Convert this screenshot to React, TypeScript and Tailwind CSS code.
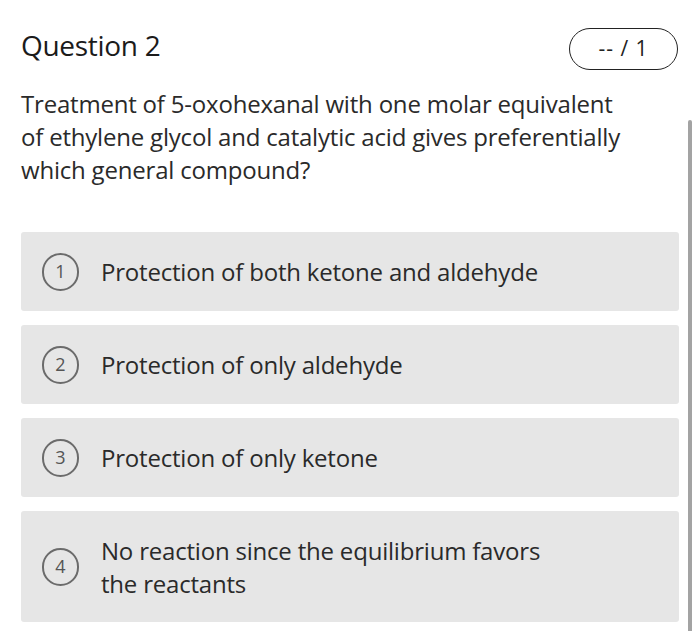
const options = [
  { text: ["Protection of both ketone and aldehyde"] },
  { text: ["Protection of only aldehyde"] },
  { text: ["Protection of only ketone"] },
  { text: ["No reaction since the equilibrium favors", "the reactants"] },
];

export default function App() {
  return (
    <div className="relative min-h-[631px] w-[700px] overflow-hidden bg-white font-['Open_Sans',sans-serif] text-[#222]">
      <div className="flex items-start justify-between pl-[21px] pr-[22px] pt-[26px]">
        <h1 className="text-[28px] leading-[38px] tracking-[-0.3px] text-[#1b1b1b]">Question 2</h1>
        <div className="mt-[2px] flex h-[42px] w-[109px] items-center justify-center rounded-full border-[1.5px] border-[#222] text-[21px] tracking-[1px] text-[#222]">
          -- / 1
        </div>
      </div>

      <p className="mt-[17px] pl-[21px] text-[24px] leading-[33px] tracking-[-0.2px] text-[#2a2a2a]">
        Treatment of 5-oxohexanal with one molar equivalent
        <br />
        of ethylene glycol and catalytic acid gives preferentially
        <br />
        which general compound?
      </p>

      <div className="mt-[46px] flex w-[679px] flex-col gap-[14px] pl-[21px]">
        {options.map((o, i) => (
          <div
            key={i}
            className={
              "flex items-center gap-[22px] rounded-[3px] bg-[#e6e6e6] pl-[21px] " +
              (o.text.length > 1 ? "h-[111px]" : "h-[79px]")
            }
          >
            <div className="flex h-[38px] w-[37px] shrink-0 items-center justify-center rounded-full border-2 border-[#6b6b6b] text-[18px] text-[#555]">
              {i + 1}
            </div>
            <span className="text-[24px] leading-[33px] tracking-[-0.2px] text-[#2a2a2a]">
              {o.text.map((t, j) => (
                <span key={j} className="block">
                  {t}
                </span>
              ))}
            </span>
          </div>
        ))}
      </div>

      <div className="absolute left-[688px] top-[120px] h-[520px] w-[4px] rounded-full bg-[#a3a3a3]" />
    </div>
  );
}
